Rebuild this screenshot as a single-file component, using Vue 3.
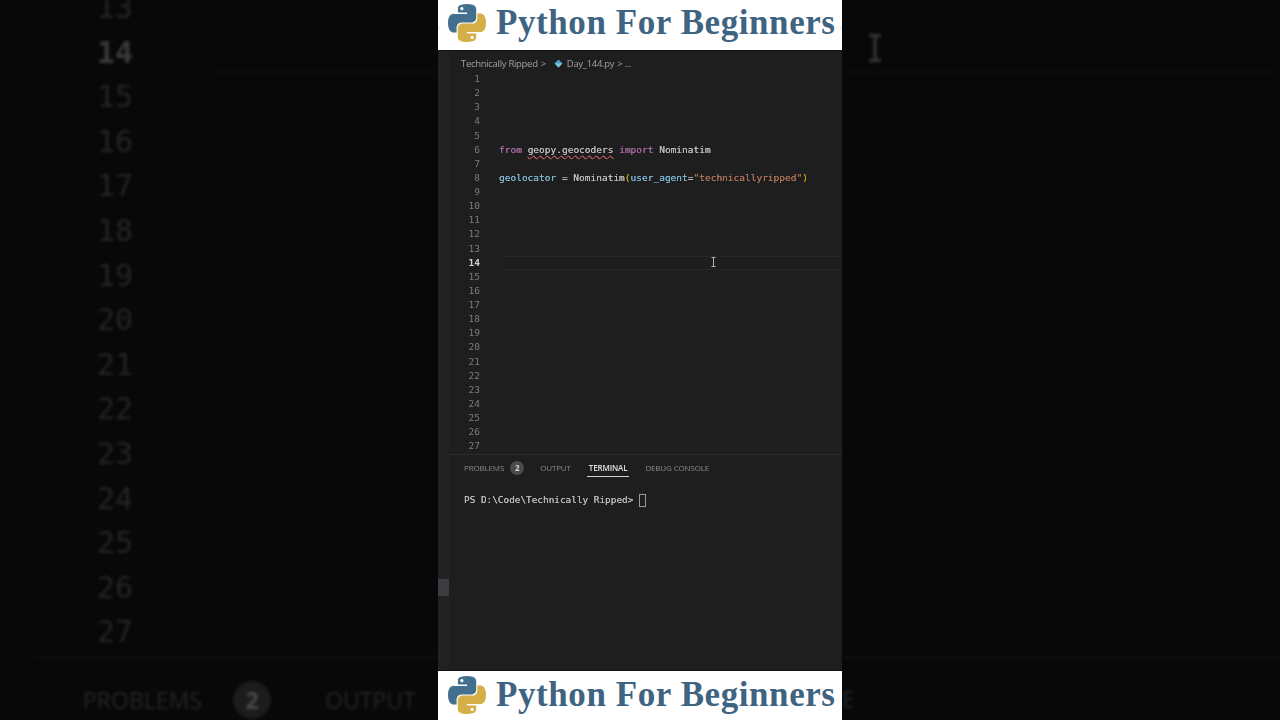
<script setup>
const lineNumbers = Array.from({ length: 27 }, (_, i) => i + 1)
const sideNumbers = Array.from({ length: 15 }, (_, i) => i + 13)
const blue = 'M54.9 0C26.8 0 28.6 12.2 28.6 12.2v12.6h26.8v3.8H17.9S0 26.6 0 54.9c0 28.3 15.6 27.3 15.6 27.3h9.3V69s-.5-15.6 15.4-15.6h26.5s14.9.2 14.9-14.4V14.8S83.9 0 54.9 0zM40.1 8.5a4.8 4.8 0 1 1 0 9.6 4.8 4.8 0 0 1 0-9.6z'
</script>

<template>
  <div class="stage">
    <aside class="side left">
      <div class="big-current left-current"></div>
      <div class="big-numbers">
        <div v-for="n in sideNumbers" :key="n" :class="{ strong: n === 14 }">{{ n }}</div>
      </div>
      <div class="big-rule"></div>
      <div class="big-tabs">
        <span class="big-problems">PROBLEMS</span>
        <span class="big-badge">2</span>
        <span>OUTPUT</span>
      </div>
    </aside>

    <main class="column">
      <header class="banner top">
        <svg class="logo" viewBox="0 0 110 110" aria-hidden="true">
          <path :d="blue" fill="#44708f" />
          <path :d="blue" fill="#d4ae47" transform="rotate(180 55 55)" />
        </svg>
        <span class="title">Python For Beginners</span>
      </header>

      <section class="window">
        <div class="activity"><div class="thumb"></div></div>
        <div class="workbench">
          <nav class="crumbs">
            <span>Technically Ripped</span>
            <span class="chev">&gt;</span>
            <svg class="file-icon" viewBox="0 0 10 10" aria-hidden="true">
              <path d="M5 .5 9.5 5 5 9.5.5 5z" fill="#4f9fc8" />
              <path d="M1 5h8L5 9.5z" fill="#7cc4dc" />
            </svg>
            <span>Day_144.py</span>
            <span class="chev">&gt;</span>
            <span>...</span>
          </nav>

          <div class="editor">
            <div class="gutter">
              <div v-for="n in lineNumbers" :key="n" :class="{ active: n === 14 }">{{ n }}</div>
            </div>
            <div class="code">
              <div class="row"></div>
              <div class="row"></div>
              <div class="row"></div>
              <div class="row"></div>
              <div class="row"></div>
              <div class="row">
                <span class="kw">from</span> <span class="squiggle">geopy.geocoders</span> <span class="kw">import</span> Nominatim
              </div>
              <div class="row"></div>
              <div class="row">
                <span class="var">geolocator</span> = Nominatim<span class="paren">(</span><span class="var">user_agent</span>=<span class="str">"technicallyripped"</span><span class="paren">)</span>
              </div>
              <div class="row"></div>
              <div class="row"></div>
              <div class="row"></div>
              <div class="row"></div>
              <div class="row"></div>
              <div class="row current">
                <svg class="caret" viewBox="0 0 5 10" aria-hidden="true">
                  <path d="M.5.5h4M.5 9.5h4M2.5.5v9" fill="none" stroke="#b5b5b5" stroke-width="1" />
                </svg>
              </div>
            </div>
          </div>

          <section class="panel">
            <div class="tabs">
              <span>PROBLEMS</span>
              <span class="badge">2</span>
              <span class="tab-output">OUTPUT</span>
              <span class="tab-terminal">TERMINAL</span>
              <span class="tab-debug">DEBUG CONSOLE</span>
            </div>
            <div class="terminal">
              <span>PS D:\Code\Technically Ripped&gt;</span>
              <span class="term-cursor"></span>
            </div>
          </section>
        </div>
      </section>

      <footer class="banner bottom">
        <svg class="logo" viewBox="0 0 110 110" aria-hidden="true">
          <path :d="blue" fill="#44708f" />
          <path :d="blue" fill="#d4ae47" transform="rotate(180 55 55)" />
        </svg>
        <span class="title">Python For Beginners</span>
      </footer>
    </main>

    <aside class="side right">
      <div class="big-current right-current"></div>
      <svg class="big-caret" viewBox="0 0 14 28" aria-hidden="true">
        <path d="M1 1.5h12M1 26.5h12M7 1.5v25" fill="none" stroke="#363636" stroke-width="3" />
      </svg>
      <div class="big-rule right-rule"></div>
      <div class="big-e">E</div>
    </aside>
  </div>
</template>

<style>
html, body { margin: 0; background: #080808; }
</style>

<style scoped>
.stage {
  display: flex;
  width: 1280px;
  height: 720px;
  overflow: hidden;
  background: #080808;
  font-family: "Open Sans", "Liberation Sans", sans-serif;
}
.side {
  position: relative;
  width: 438px;
  height: 720px;
  flex: none;
  overflow: hidden;
  filter: blur(1.4px);
}
.big-current {
  position: absolute;
  top: 28px;
  height: 42px;
  border-top: 1px solid #0d0d0d;
  border-bottom: 2px solid #0e0e0e;
}
.left-current { left: 210px; right: 0; }
.right-current { left: 0; right: 0; }
.big-numbers {
  margin-top: -14px;
  padding-left: 97px;
  font: 30px/44.6px "DejaVu Sans Mono", monospace;
  color: #252525;
}
.big-numbers .strong { color: #3a3a3a; font-weight: 700; }
.big-rule {
  height: 2px;
  margin: 1px 0 0 35px;
  background: #111;
}
.big-tabs {
  display: flex;
  align-items: center;
  height: 38px;
  margin-top: 23px;
  padding-left: 83px;
  font-size: 23px;
  color: #262626;
}
.big-problems { width: 125px; white-space: nowrap; }
.big-badge {
  display: flex;
  align-items: center;
  justify-content: center;
  width: 38px;
  height: 38px;
  margin: 0 54px 0 25px;
  border-radius: 50%;
  background: #1c1c1c;
  color: #4a4a4a;
  font-weight: 700;
}
.column {
  display: flex;
  flex-direction: column;
  width: 404px;
  height: 720px;
  flex: none;
  background: #1e1e1e;
}
.banner {
  display: flex;
  align-items: center;
  gap: 10px;
  flex: none;
  padding-left: 10px;
  background: #fff;
  overflow: hidden;
  box-sizing: border-box;
}
.top { height: 51px; border-bottom: 1px solid #111; padding-bottom: 5px; }
.bottom { height: 50px; border-top: 1px solid #111; padding-bottom: 2px; }
.logo { width: 38px; height: 38px; flex: none; }
.title {
  font: 700 35px/1 "Liberation Serif", serif;
  letter-spacing: 0.58px;
  color: #3f6482;
  white-space: nowrap;
}
.window {
  display: flex;
  flex: 1;
  min-height: 0;
  filter: blur(0.5px);
}
.activity {
  width: 11px;
  flex: none;
  background: #222224;
}
.thumb {
  width: 11px;
  height: 17px;
  margin-top: 528px;
  background: #3b3b40;
}
.workbench {
  display: flex;
  flex-direction: column;
  flex: 1;
  min-width: 0;
}
.crumbs {
  display: flex;
  align-items: center;
  height: 20px;
  padding-top: 4px;
  box-sizing: border-box;
  flex: none;
  padding-left: 12px;
  font-size: 9.5px;
  letter-spacing: -0.3px;
  color: #a0a0a0;
  white-space: nowrap;
}
.chev { margin: 0 2px 0 3px; }
.file-icon { width: 9px; height: 9px; margin: 0 4px 0 6px; }
.editor {
  display: flex;
  height: 383px;
  flex: none;
  padding-top: 1px;
  font: 9.5px/14.13px "DejaVu Sans Mono", monospace;
  box-sizing: border-box;
  overflow: hidden;
}
.gutter {
  width: 31px;
  flex: none;
  text-align: right;
  color: #7c7c7c;
}
.gutter .active { color: #d0d0d0; font-weight: 700; }
.code {
  flex: 1;
  margin-left: 19px;
  color: #bdbdbd;
  text-shadow: 0 0 0.6px currentColor;
  min-width: 0;
}
.row { height: 14.13px; white-space: pre; }
.kw { color: #a5689f; }
.var { color: #7fb6d2; }
.paren { color: #cba900; }
.str { color: #ad7459; }
.squiggle {
  text-decoration: underline wavy #b93b39 0.8px;
  text-underline-offset: 1.5px;
}
.current {
  position: relative;
  box-sizing: border-box;
  margin: 0 2px 0 4px;
  border-top: 1px solid #272727;
  border-bottom: 1px solid #272727;
}
.caret {
  position: absolute;
  left: 208px;
  top: 0;
  width: 5px;
  height: 10px;
}
.panel {
  flex: 1;
  border-top: 1px solid #2d2d2d;
}
.tabs {
  display: flex;
  align-items: center;
  height: 25px;
  padding-left: 15px;
  font-size: 8px;
  letter-spacing: -0.15px;
  color: #8a8a8a;
  white-space: nowrap;
}
.badge {
  display: flex;
  align-items: center;
  justify-content: center;
  width: 14px;
  height: 14px;
  margin-left: 6px;
  border-radius: 50%;
  background: #4b4b4b;
  color: #d8d8d8;
  font-size: 8px;
  font-weight: 700;
}
.tab-output { margin-left: 16px; }
.tab-terminal {
  position: relative;
  margin-left: 18px;
  color: #e0e0e0;
  font-weight: 600;
}
.tab-terminal::after {
  content: "";
  position: absolute;
  left: -2px;
  right: -2px;
  bottom: -4px;
  height: 1px;
  background: #d0d0d0;
}
.tab-debug { margin-left: 18px; }
.terminal {
  display: flex;
  align-items: center;
  margin-top: 13px;
  padding-left: 15px;
  height: 14px;
  font: 9.4px/14px "DejaVu Sans Mono", monospace;
  color: #bdbdbd;
  text-shadow: 0 0 0.6px currentColor;
  white-space: pre;
}
.term-cursor {
  width: 5px;
  height: 11px;
  margin-left: 6px;
  border: 1px solid #9a9a9a;
}
.right { padding-top: 34px; box-sizing: border-box; }
.big-caret { display: block; width: 14px; height: 28px; margin-left: 26px; }
.right-rule { margin: 594px 0 0; }
.big-e {
  margin-top: 28px;
  font-size: 23px;
  line-height: 26px;
  color: #262626;
}
</style>
